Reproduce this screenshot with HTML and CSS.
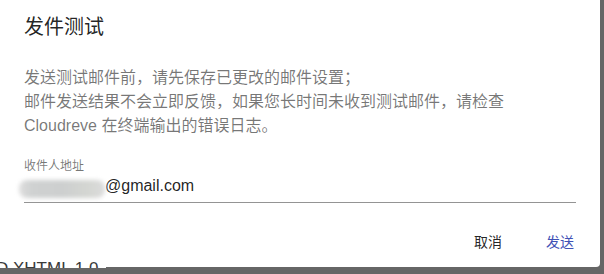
FILE: index.html
```html
<!DOCTYPE html>
<html lang="zh-CN">
<head>
<meta charset="utf-8">
<title>发件测试</title>
<link rel="stylesheet" href="styles.css">
</head>
<body>
<div class="dialog">
  <h2 class="title">发件测试</h2>
  <div class="content">
    <p class="desc">发送测试邮件前，请先保存已更改的邮件设置；<br>邮件发送结果不会立即反馈，如果您长时间未收到测试邮件，请检查<br>Cloudreve 在终端输出的错误日志。</p>
    <div class="field">
      <label class="label">收件人地址</label>
      <div class="input-row"><span class="mosaic"></span><span class="value">@gmail.com</span></div>
    </div>
  </div>
  <div class="actions">
    <button class="btn btn-cancel">取消</button>
    <button class="btn btn-primary">发送</button>
  </div>
</div>
<div class="behind"><span>D XHTML 1.0</span></div>
</body>
</html>
```
FILE: styles.css
```css
html, body {
  margin: 0;
  padding: 0;
}
body {
  width: 604px;
  height: 274px;
  background: #666666;
  overflow: hidden;
  position: relative;
  font-family: "Liberation Sans", "Noto Sans CJK SC", sans-serif;
}
.dialog {
  width: 600px;
  height: 267px;
  background: #ffffff;
  border-radius: 0 0 4px 0;
  display: flex;
  flex-direction: column;
  box-sizing: border-box;
}
.title {
  margin: 0;
  padding: 11px 24px 0;
  font-size: 20px;
  line-height: 32px;
  font-weight: 400;
  color: rgba(0, 0, 0, 0.87);
}
.content {
  padding: 23px 24px 0;
}
.desc {
  margin: 0;
  font-size: 16px;
  line-height: 24px;
  color: rgba(0, 0, 0, 0.54);
}
.field {
  margin-top: 20px;
}
.label {
  display: block;
  font-size: 12px;
  line-height: 16px;
  color: rgba(0, 0, 0, 0.54);
}
.input-row {
  display: flex;
  align-items: center;
  height: 24px;
  padding-bottom: 4px;
  border-bottom: 1px solid rgba(0, 0, 0, 0.42);
  font-size: 16px;
  line-height: 24px;
  color: rgba(0, 0, 0, 0.87);
}
.mosaic {
  display: inline-block;
  width: 86px;
  height: 18px;
  margin-left: -5px;
  margin-top: 6px;
  margin-right: 0;
  background: linear-gradient(90deg, #dedede 0%, #cfd1d1 15%, #cdcfcf 50%, #d4d6d2 80%, #dcdcdc 100%);
  border-radius: 8px;
  filter: blur(2px);
}
.actions {
  margin-top: 21px;
  display: flex;
  justify-content: flex-end;
  gap: 8px;
  padding: 0 8px;
}
.btn {
  min-width: 64px;
  padding: 6px 8px;
  border: 0;
  background: transparent;
  font-family: "Liberation Sans", "Noto Sans CJK SC", sans-serif;
  font-size: 14px;
  line-height: 24px;
  border-radius: 4px;
}
.btn-cancel {
  color: rgba(0, 0, 0, 0.87);
}
.btn-primary {
  color: #3f51b5;
}
.behind {
  position: absolute;
  left: -4px;
  top: 262px;
  height: 6px;
  overflow: hidden;
  background: #ffffff;
  width: 110px;
}
.behind span {
  display: block;
  font-size: 17px;
  line-height: 14px;
  color: #3a3a3a;
  margin-top: 0px;
  white-space: nowrap;
}
```
